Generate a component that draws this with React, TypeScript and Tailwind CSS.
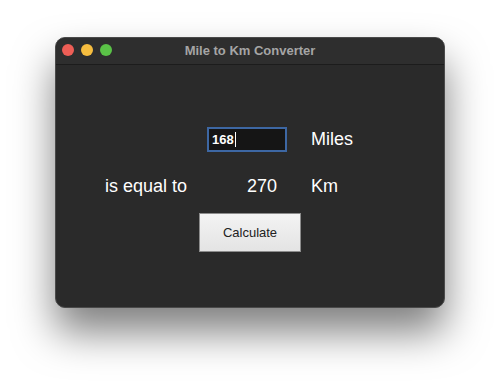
export default function App() {
  return (
    <div className="w-[500px] h-[381px] bg-white flex justify-center pt-[37px]" style={{ fontFamily: '"Liberation Sans", Arial, sans-serif' }}>
      <div className="w-[390px] h-[271px] rounded-[10px] bg-[#2a2a2a] border border-[#4a4a4a] shadow-[0_24px_40px_rgba(0,0,0,0.5)] overflow-hidden flex flex-col">
        <div className="h-[27px] bg-[#2e2e2e] border-b border-[#1c1c1c] relative flex items-center justify-center">
          <div className="absolute left-[6px] top-[6px] flex gap-[7px]">
            <span className="w-[12px] h-[12px] rounded-full bg-[#ee5e56]" />
            <span className="w-[12px] h-[12px] rounded-full bg-[#f6bd3f]" />
            <span className="w-[12px] h-[12px] rounded-full bg-[#5ac247]" />
          </div>
          <span className="text-[13px] font-bold text-[#a5a5a5]">Mile to Km Converter</span>
        </div>
        <div className="flex-1 pt-[61px]">
          <div className="grid grid-cols-[151px_104px_auto] items-center">
            <div />
            <div className="w-[80px] h-[25px] bg-[#151515] border-2 border-[#3d67a3] flex items-center pl-[3px] text-[13px] font-bold text-white">
              168<span className="w-px h-[15px] bg-white ml-px" />
            </div>
            <span className="text-[18px] text-white">Miles</span>
          </div>
          <div className="grid grid-cols-[151px_104px_auto] items-center mt-[20px]">
            <span className="pl-[49px] text-[18px] text-white">is equal to</span>
            <span className="pl-[40px] text-[18px] text-white">270</span>
            <span className="text-[18px] text-white">Km</span>
          </div>
          <div className="pl-[143px] mt-[13px]">
            <button className="w-[102px] h-[39px] bg-gradient-to-b from-[#f3f3f3] to-[#e4e4e4] border border-[#8c8c8c] text-[13px] text-[#222]">
              Calculate
            </button>
          </div>
        </div>
      </div>
    </div>
  );
}
